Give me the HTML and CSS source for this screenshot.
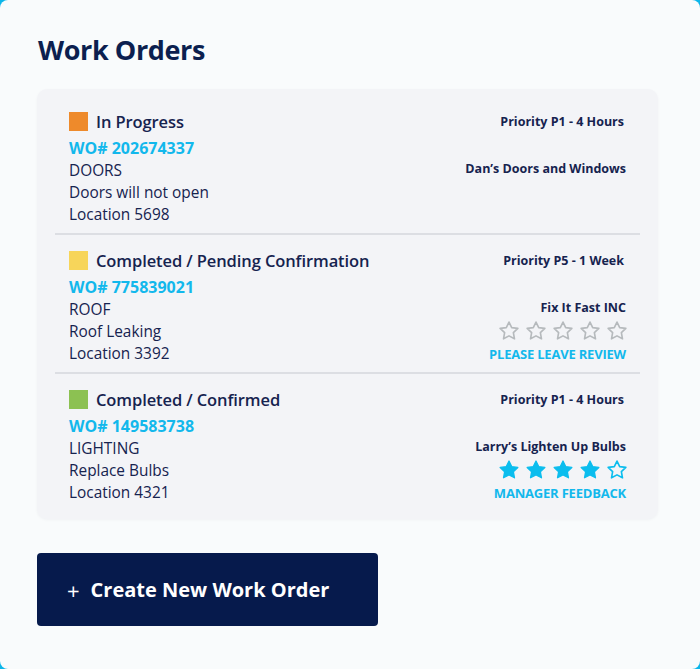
FILE: index.html
```html
<!DOCTYPE html>
<html lang="en">

<head>
    <meta charset="UTF-8">
    <meta name="viewport" content="width=device-width, initial-scale=1.0">
    <title>Work Orders</title>
    <link rel="stylesheet" href="styles.css">
</head>

<body>
    <div class="page">
        <h1 class="title">Work Orders</h1>

        <div class="orders">
            <!-- in progress -->
            <div class="order">
                <div class="info">
                    <div class="status"><span class="dot orange"></span>In Progress</div>
                    <div class="wo">WO# 202674337</div>
                    <div class="line">DOORS</div>
                    <div class="line">Doors will not open</div>
                    <div class="line">Location 5698</div>
                </div>
                <div class="side">
                    <div class="priority">Priority P1 - 4 Hours</div>
                    <div class="vendor">Dan’s Doors and Windows</div>
                </div>
            </div>

            <!-- pending confirmation -->
            <div class="order">
                <div class="info">
                    <div class="status"><span class="dot yellow"></span>Completed / Pending Confirmation</div>
                    <div class="wo">WO# 775839021</div>
                    <div class="line">ROOF</div>
                    <div class="line">Roof Leaking</div>
                    <div class="line">Location 3392</div>
                </div>
                <div class="side">
                    <div class="priority">Priority P5 - 1 Week</div>
                    <div class="vendor">Fix It Fast INC</div>
                    <div class="stars">
                        <svg class="star empty" viewBox="0 0 24 24"><path d="M12 2.2l2.95 6.1 6.7.9-4.88 4.67 1.2 6.65L12 17.3l-5.97 3.22 1.2-6.65L2.35 9.2l6.7-.9z"/></svg>
                        <svg class="star empty" viewBox="0 0 24 24"><path d="M12 2.2l2.95 6.1 6.7.9-4.88 4.67 1.2 6.65L12 17.3l-5.97 3.22 1.2-6.65L2.35 9.2l6.7-.9z"/></svg>
                        <svg class="star empty" viewBox="0 0 24 24"><path d="M12 2.2l2.95 6.1 6.7.9-4.88 4.67 1.2 6.65L12 17.3l-5.97 3.22 1.2-6.65L2.35 9.2l6.7-.9z"/></svg>
                        <svg class="star empty" viewBox="0 0 24 24"><path d="M12 2.2l2.95 6.1 6.7.9-4.88 4.67 1.2 6.65L12 17.3l-5.97 3.22 1.2-6.65L2.35 9.2l6.7-.9z"/></svg>
                        <svg class="star empty" viewBox="0 0 24 24"><path d="M12 2.2l2.95 6.1 6.7.9-4.88 4.67 1.2 6.65L12 17.3l-5.97 3.22 1.2-6.65L2.35 9.2l6.7-.9z"/></svg>
                    </div>
                    <div class="action">PLEASE LEAVE REVIEW</div>
                </div>
            </div>

            <!-- confirmed -->
            <div class="order">
                <div class="info">
                    <div class="status"><span class="dot green"></span>Completed / Confirmed</div>
                    <div class="wo">WO# 149583738</div>
                    <div class="line">LIGHTING</div>
                    <div class="line">Replace Bulbs</div>
                    <div class="line">Location 4321</div>
                </div>
                <div class="side">
                    <div class="priority">Priority P1 - 4 Hours</div>
                    <div class="vendor">Larry’s Lighten Up Bulbs</div>
                    <div class="stars">
                        <svg class="star full" viewBox="0 0 24 24"><path d="M12 2.2l2.95 6.1 6.7.9-4.88 4.67 1.2 6.65L12 17.3l-5.97 3.22 1.2-6.65L2.35 9.2l6.7-.9z"/></svg>
                        <svg class="star full" viewBox="0 0 24 24"><path d="M12 2.2l2.95 6.1 6.7.9-4.88 4.67 1.2 6.65L12 17.3l-5.97 3.22 1.2-6.65L2.35 9.2l6.7-.9z"/></svg>
                        <svg class="star full" viewBox="0 0 24 24"><path d="M12 2.2l2.95 6.1 6.7.9-4.88 4.67 1.2 6.65L12 17.3l-5.97 3.22 1.2-6.65L2.35 9.2l6.7-.9z"/></svg>
                        <svg class="star full" viewBox="0 0 24 24"><path d="M12 2.2l2.95 6.1 6.7.9-4.88 4.67 1.2 6.65L12 17.3l-5.97 3.22 1.2-6.65L2.35 9.2l6.7-.9z"/></svg>
                        <svg class="star outline" viewBox="0 0 24 24"><path d="M12 2.2l2.95 6.1 6.7.9-4.88 4.67 1.2 6.65L12 17.3l-5.97 3.22 1.2-6.65L2.35 9.2l6.7-.9z"/></svg>
                    </div>
                    <div class="action">MANAGER FEEDBACK</div>
                </div>
            </div>
        </div>

        <button class="create"><span class="plus">+</span>Create New Work Order</button>
    </div>
</body>

</html>
```

FILE: styles.css
```css
html,
body {
    padding: 0;
    margin: 0;
}

body {
    background-color: #0cb6ea;
    font-family: "Open Sans", "Noto Sans", sans-serif;
    color: #16234f;
}

.page {
    height: 669px;
    box-sizing: border-box;
    padding: 32px 42px 0 37px;
    background-color: #f9fbfc;
    border-radius: 8px;
}

.title {
    margin: 0 0 21px 1px;
    font-size: 27px;
    line-height: 36px;
    font-weight: 700;
    color: #0c1f4f;
    letter-spacing: -0.4px;
}

.orders {
    background-color: #f3f4f7;
    border-radius: 10px;
    padding: 7px 18px 8px;
    box-shadow: 0 1px 3px rgba(20, 30, 60, 0.04);
}

.order {
    display: flex;
    justify-content: space-between;
    padding: 12px 14px 7px;
    border-bottom: 2px solid #dcdee3;
}

.order:last-child {
    border-bottom: none;
}

.status {
    display: flex;
    align-items: center;
    height: 26px;
    font-size: 16.5px;
    font-weight: 600;
    letter-spacing: -0.1px;
}

.dot {
    width: 19px;
    height: 19px;
    margin-right: 8px;
}

.dot.orange {
    background-color: #ee8a2b;
}

.dot.yellow {
    background-color: #f7d55a;
}

.dot.green {
    background-color: #8cc152;
}

.wo {
    height: 26px;
    line-height: 28px;
    font-size: 16px;
    font-weight: 700;
    color: #12b8ec;
}

.line {
    line-height: 22px;
    font-size: 15.4px;
}

.side {
    display: flex;
    flex-direction: column;
    align-items: flex-end;
    text-align: right;
}

.priority {
    line-height: 28px;
    font-size: 12.5px;
    font-weight: 700;
    margin-right: 2px;
}

.vendor {
    margin-top: 22px;
    line-height: 22px;
    font-size: 12.5px;
    font-weight: 700;
}

.stars {
    display: flex;
    gap: 5px;
    height: 24px;
    align-items: center;
    margin-right: -2px;
}

.star {
    width: 22px;
    height: 22px;
}

.star.empty path {
    fill: none;
    stroke: #b6babd;
    stroke-width: 1.8;
    stroke-linejoin: round;
}

.star.full path {
    fill: #0bbdee;
    stroke: #0bbdee;
    stroke-width: 1.4;
    stroke-linejoin: round;
}

.star.outline path {
    fill: none;
    stroke: #0bbdee;
    stroke-width: 1.8;
    stroke-linejoin: round;
}

.action {
    line-height: 22px;
    font-size: 13px;
    font-weight: 700;
    color: #12b8ec;
    letter-spacing: -0.2px;
}

.create {
    display: flex;
    align-items: center;
    margin-top: 34px;
    width: 341px;
    height: 73px;
    padding: 0 0 0 30px;
    border: none;
    border-radius: 4px;
    background-color: #061a4c;
    color: #fff;
    font-family: "Open Sans", "Noto Sans", sans-serif;
    font-size: 20px;
    font-weight: 700;
    cursor: pointer;
}

.plus {
    font-weight: 400;
    font-size: 22px;
    margin-right: 11px;
}
```
